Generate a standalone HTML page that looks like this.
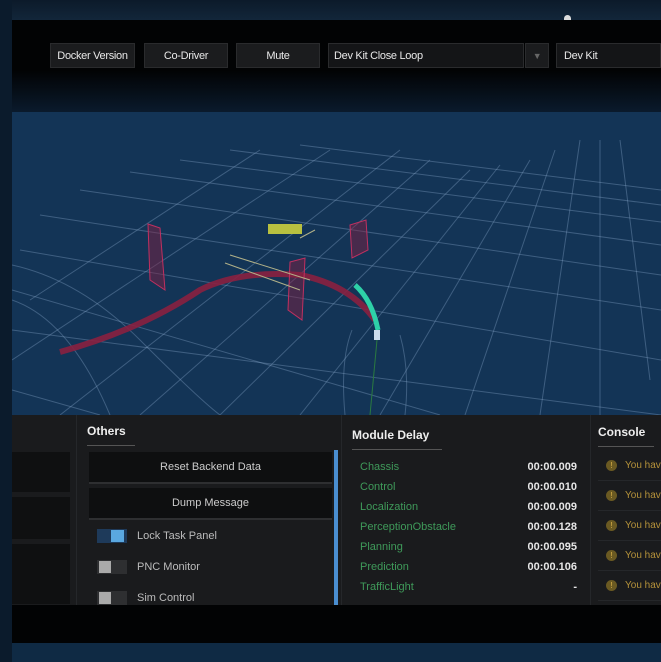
<!DOCTYPE html><html><head><style>
body{margin:0;width:661px;height:662px;overflow:hidden;background:#0f2740;font-family:"Liberation Sans",sans-serif;position:relative}
.a{position:absolute}
.btn{position:absolute;top:43px;height:25px;background:#1b1c1e;border:1px solid #2a2b2d;color:#e8e8e8;font-size:11px;line-height:25px;text-align:center;box-sizing:border-box;letter-spacing:-0.3px}
.md{position:absolute;left:360px;font-size:11px;color:#3f9a5a}
.mv{position:absolute;right:84px;font-size:11px;color:#e6e6e6;font-weight:bold}
.cl{position:absolute;left:598px;width:63px;height:29px;border-bottom:1px solid #25272a;font-size:10px;color:#b5923a}
.cl i{display:inline-block;width:11px;height:11px;border-radius:50%;background:#6b5a22;color:#d9b04a;font-style:normal;font-size:8px;text-align:center;line-height:11px;margin:9px 8px 0 8px;vertical-align:top}
.cl span{display:inline-block;margin-top:9px}
</style></head><body>
<div class="a" style="left:0;top:0;width:661px;height:20px;background:linear-gradient(#0c1a2a,#12263a)"></div>
<div class="a" style="left:564px;top:15px;width:7px;height:5px;border-radius:4px 4px 0 0;background:#ddd"></div>
<div class="a" style="left:12px;top:20px;width:649px;height:92px;background:linear-gradient(#020304 55%,#0a1a2c)"></div>
<div class="a" style="left:0;top:0;width:12px;height:662px;background:#0b1b2c"></div>
<div class="btn" style="left:50px;width:85px">Docker Version</div>
<div class="btn" style="left:144px;width:84px">Co-Driver</div>
<div class="btn" style="left:236px;width:84px">Mute</div>
<div class="btn" style="left:328px;width:196px;text-align:left;padding-left:5px;background:#141517">Dev Kit Close Loop</div>
<div class="btn" style="left:525px;width:24px;color:#666;font-size:9px">▼</div>
<div class="btn" style="left:556px;width:105px;text-align:left;padding-left:7px;background:#141517">Dev Kit</div>
<svg class="a" style="left:12px;top:112px" width="649" height="303" viewBox="12 112 649 303">
<rect x="12" y="112" width="649" height="303" fill="#133456"/>
<g stroke="#8fb0d0" stroke-opacity=".35" stroke-width="1" fill="none">
<line x1="20" y1="250" x2="661" y2="360"/><line x1="40" y1="215" x2="661" y2="310"/><line x1="80" y1="190" x2="661" y2="275"/><line x1="130" y1="172" x2="661" y2="245"/><line x1="180" y1="160" x2="661" y2="222"/><line x1="230" y1="150" x2="661" y2="205"/><line x1="300" y1="145" x2="661" y2="190"/>
<line x1="12" y1="330" x2="661" y2="415"/><line x1="12" y1="290" x2="440" y2="415"/>
<line x1="12" y1="390" x2="100" y2="415"/>
<line x1="60" y1="415" x2="400" y2="150"/><line x1="140" y1="415" x2="430" y2="160"/><line x1="220" y1="415" x2="470" y2="170"/><line x1="300" y1="415" x2="500" y2="165"/><line x1="380" y1="415" x2="530" y2="160"/><line x1="465" y1="415" x2="555" y2="150"/><line x1="540" y1="415" x2="580" y2="140"/><line x1="600" y1="415" x2="600" y2="140"/><line x1="650" y1="380" x2="620" y2="140"/>
<line x1="12" y1="360" x2="330" y2="150"/><line x1="30" y1="300" x2="260" y2="150"/>
<path d="M12 265 Q80 280 140 340 T220 415"/><path d="M12 300 Q70 320 110 415"/>
<path d="M345 415 Q340 360 352 330"/><path d="M405 415 Q410 370 400 335"/>
</g>
<path d="M60 352 Q140 330 200 290 Q240 270 300 275 Q350 285 375 320" stroke="#8a2040" stroke-width="6" fill="none" opacity=".9"/>
<path d="M355 285 Q372 300 378 330" stroke="#2ed1a8" stroke-width="5" fill="none"/>
<rect x="374" y="330" width="6" height="10" fill="#cde"/>
<path d="M377 340 L370 415" stroke="#2a7a40" stroke-width="1"/>
<g fill="#8a2040" fill-opacity=".45" stroke="#c03060" stroke-width="1"><path d="M148 224 L160 228 L165 290 L150 280Z"/><path d="M290 262 L305 258 L302 320 L288 310Z"/><path d="M350 225 L366 220 L368 250 L352 258Z"/></g>
<rect x="268" y="224" width="34" height="10" fill="#b8c040"/>
<g stroke="#b0b088" fill="none"><path d="M225 263 L300 290"/><path d="M230 255 L310 280"/><path d="M300 238 L315 230"/></g>
</svg>
<div class="a" style="left:12px;top:415px;width:649px;height:190px;background:#1a1b1d"></div>
<div class="a" style="left:12px;top:452px;width:58px;height:40px;background:#0f1011"></div>
<div class="a" style="left:12px;top:497px;width:58px;height:42px;background:#0f1011"></div>
<div class="a" style="left:12px;top:544px;width:58px;height:60px;background:#0f1011"></div>
<div class="a" style="left:76px;top:415px;width:1px;height:190px;background:#25272a"></div>
<div class="a" style="left:87px;top:424px;color:#eee;font-size:12px;font-weight:bold">Others</div>
<div class="a" style="left:87px;top:445px;width:48px;height:1px;background:#555"></div>
<div class="a" style="left:89px;top:452px;width:243px;height:30px;background:#0e0f10;border-bottom:2px solid #2e2f31;color:#ccc;font-size:11px;text-align:center;line-height:30px">Reset Backend Data</div>
<div class="a" style="left:89px;top:488px;width:243px;height:30px;background:#0e0f10;border-bottom:2px solid #2e2f31;color:#ccc;font-size:11px;text-align:center;line-height:30px">Dump Message</div>
<div class="a" style="left:97px;top:529px;width:30px;height:14px;background:#1e3a5a"></div><div class="a" style="left:111px;top:530px;width:13px;height:12px;background:#5aa8e0"></div>
<div class="a" style="left:97px;top:560px;width:30px;height:14px;background:#2e2f31"></div><div class="a" style="left:99px;top:561px;width:12px;height:12px;background:#aaa"></div>
<div class="a" style="left:97px;top:591px;width:30px;height:14px;background:#2e2f31"></div><div class="a" style="left:99px;top:592px;width:12px;height:12px;background:#aaa"></div>
<div class="a" style="left:137px;top:530px;color:#bbb;font-size:11px">Lock Task Panel</div>
<div class="a" style="left:137px;top:561px;color:#bbb;font-size:11px">PNC Monitor</div>
<div class="a" style="left:137px;top:592px;color:#bbb;font-size:11px">Sim Control</div>
<div class="a" style="left:334px;top:450px;width:4px;height:155px;background:#4a8ed0"></div>
<div class="a" style="left:341px;top:415px;width:1px;height:190px;background:#25272a"></div>
<div class="a" style="left:352px;top:428px;color:#eee;font-size:12px;font-weight:bold">Module Delay</div>
<div class="a" style="left:352px;top:449px;width:90px;height:1px;background:#555"></div>
<div class="md" style="top:461px">Chassis</div><div class="mv" style="top:461px">00:00.009</div>
<div class="md" style="top:481px">Control</div><div class="mv" style="top:481px">00:00.010</div>
<div class="md" style="top:501px">Localization</div><div class="mv" style="top:501px">00:00.009</div>
<div class="md" style="top:521px">PerceptionObstacle</div><div class="mv" style="top:521px">00:00.128</div>
<div class="md" style="top:541px">Planning</div><div class="mv" style="top:541px">00:00.095</div>
<div class="md" style="top:561px">Prediction</div><div class="mv" style="top:561px">00:00.106</div>
<div class="md" style="top:581px">TrafficLight</div><div class="mv" style="top:581px">-</div>
<div class="a" style="left:590px;top:415px;width:1px;height:190px;background:#25272a"></div>
<div class="a" style="left:598px;top:425px;color:#eee;font-size:12px;font-weight:bold">Console</div>
<div class="a" style="left:598px;top:446px;width:56px;height:1px;background:#555"></div>
<div class="cl" style="top:451px"><i>!</i><span>You hav</span></div>
<div class="cl" style="top:481px"><i>!</i><span>You hav</span></div>
<div class="cl" style="top:511px"><i>!</i><span>You hav</span></div>
<div class="cl" style="top:541px"><i>!</i><span>You hav</span></div>
<div class="cl" style="top:571px"><i>!</i><span>You hav</span></div>
<div class="a" style="left:12px;top:605px;width:649px;height:38px;background:#020304"></div>
<div class="a" style="left:12px;top:643px;width:649px;height:19px;background:#0f2a44"></div>
</body></html>
